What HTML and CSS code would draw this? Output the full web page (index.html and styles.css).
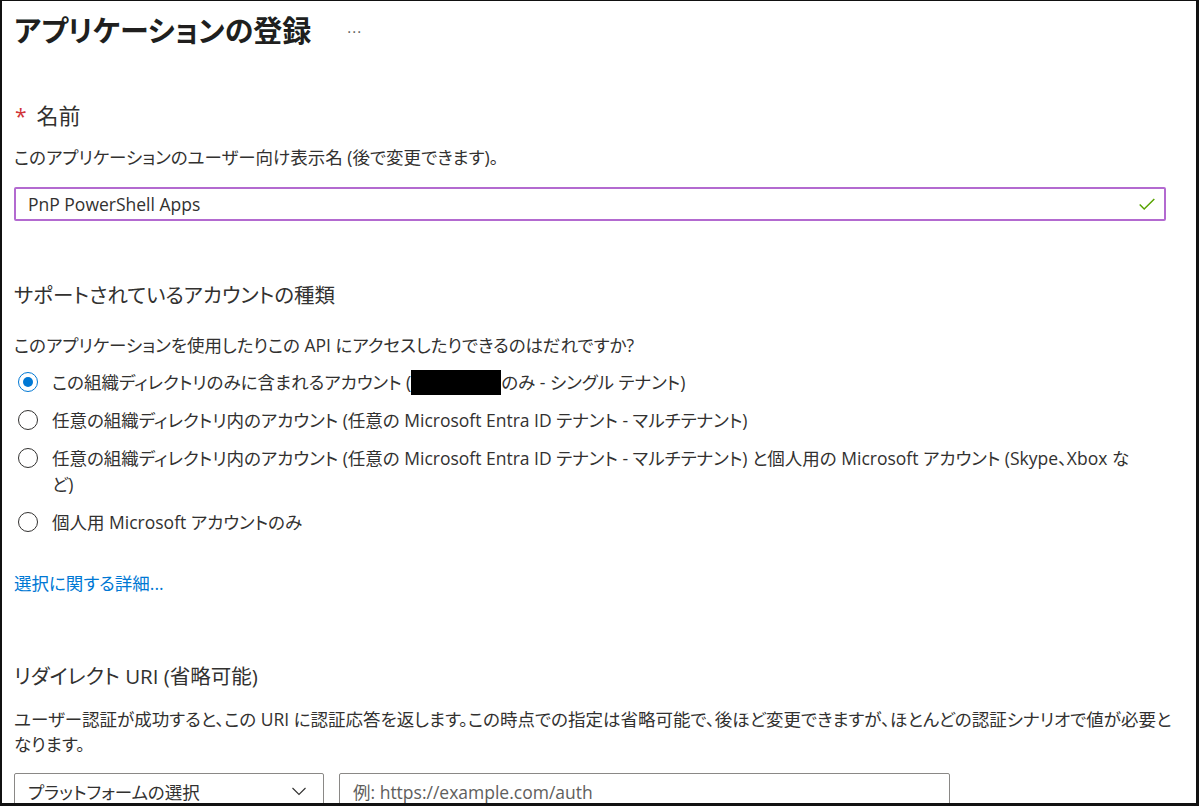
FILE: index.html
```html
<!DOCTYPE html>
<html lang="ja">
<head>
    <meta charset="UTF-8">
    <meta name="viewport" content="width=device-width, initial-scale=1.0">
    <title>アプリケーションの登録</title>
    <link rel="stylesheet" href="styles.css">
</head>
<body>

    <div class="frame">
        <div class="page-header">
            <h1>アプリケーションの登録</h1>
            <span class="more">···</span>
        </div>

        <!-- 名前 -->
        <div class="field-label"><span class="required">*</span>名前</div>
        <p class="hint">このアプリケーションのユーザー向け表示名 (後で変更できます)。</p>
        <div class="text-input valid">
            <span class="value">PnP PowerShell Apps</span>
            <svg class="check" width="18" height="18" viewBox="0 0 16 16">
                <path d="M1.5 8.5 L5.5 12.5 L14.5 3.5" fill="none" stroke="#57a300" stroke-width="1.3"/>
            </svg>
        </div>

        <!-- アカウントの種類 -->
        <h2>サポートされているアカウントの種類</h2>
        <p class="question">このアプリケーションを使用したりこの API にアクセスしたりできるのはだれですか?</p>
        <div class="radio-group">
            <div class="radio-row">
                <span class="radio checked"></span>
                <span class="radio-text">この組織ディレクトリのみに含まれるアカウント (<span class="redacted"></span>のみ - シングル テナント)</span>
            </div>
            <div class="radio-row">
                <span class="radio"></span>
                <span class="radio-text">任意の組織ディレクトリ内のアカウント (任意の Microsoft Entra ID テナント - マルチテナント)</span>
            </div>
            <div class="radio-row">
                <span class="radio"></span>
                <span class="radio-text">任意の組織ディレクトリ内のアカウント (任意の Microsoft Entra ID テナント - マルチテナント) と個人用の Microsoft アカウント (Skype、Xbox など)</span>
            </div>
            <div class="radio-row">
                <span class="radio"></span>
                <span class="radio-text">個人用 Microsoft アカウントのみ</span>
            </div>
        </div>
        <a class="link" href="#">選択に関する詳細...</a>

        <!-- リダイレクト URI -->
        <h2 class="redirect-title">リダイレクト URI (省略可能)</h2>
        <p class="desc">ユーザー認証が成功すると、この URI に認証応答を返します。この時点での指定は省略可能で、後ほど変更できますが、ほとんどの認証シナリオで値が必要となります。</p>
        <div class="redirect-row">
            <div class="select">
                <span>プラットフォームの選択</span>
                <svg width="16" height="16" viewBox="0 0 16 16">
                    <path d="M1.5 5 L8 11.5 L14.5 5" fill="none" stroke="#323130" stroke-width="1.1"/>
                </svg>
            </div>
            <div class="url-input">例: https://example.com/auth</div>
        </div>
    </div>

</body>
</html>
```

FILE: styles.css
```css
/* ページ全体 */
body {
    margin: 0;
    background: #fff;
    font-family: 'Open Sans', 'Noto Sans CJK JP', sans-serif;
    font-feature-settings: "palt";
    font-size: 17.5px;
    color: #323130;
}

.frame {
    box-sizing: border-box;
    width: 1199px;
    height: 806px;
    border-style: solid;
    border-color: #111;
    border-width: 1px 3px 3px 2px;
    padding: 12px 0 0 12px;
    overflow: hidden;
}

.page-header {
    display: flex;
    align-items: center;
    height: 36px;
}

h1 {
    margin: 0;
    font-size: 29px;
    font-weight: 700;
    line-height: 36px;
    color: #201f1e;
}

.more {
    margin-left: 36px;
    font-size: 15px;
    color: #605e5c;
    letter-spacing: 1px;
}

.field-label {
    margin-top: 52px;
    font-size: 22px;
    line-height: 28px;
}

.required {
    color: #d13438;
    font-size: 21px;
    margin: 0 10px 0 1px;
}

.hint, .question, .desc {
    margin: 0;
    line-height: 22px;
}

.hint { margin-top: 16px; }

.text-input {
    box-sizing: border-box;
    width: 1152px;
    height: 34px;
    margin-top: 19px;
    padding: 0 8px 0 12px;
    border-radius: 2px;
    display: flex;
    align-items: center;
    justify-content: space-between;
}

.text-input.valid { border: 2px solid #b36ad0; }

h2 {
    margin: 60px 0 0;
    font-size: 20.5px;
    font-weight: 400;
    line-height: 28px;
}

.question { margin-top: 25px; }

.radio-group {
    margin-top: 13px;
    display: flex;
    flex-direction: column;
    gap: 12px;
    width: 1125px;
}

.radio-row {
    display: flex;
    align-items: flex-start;
    gap: 14px;
    padding-left: 4px;
    line-height: 26px;
}

.radio {
    flex: none;
    box-sizing: border-box;
    width: 20px;
    height: 20px;
    margin-top: 3px;
    border: 1px solid #323130;
    border-radius: 50%;
    display: flex;
    align-items: center;
    justify-content: center;
}

.radio.checked { border-color: #0078d4; }

.radio.checked::after {
    content: "";
    width: 10px;
    height: 10px;
    border-radius: 50%;
    background: #0078d4;
}

.redacted {
    display: inline-block;
    width: 90px;
    height: 25px;
    background: #000;
    vertical-align: -6px;
}

.link {
    display: block;
    margin-top: 37px;
    line-height: 22px;
    color: #0078d4;
    text-decoration: none;
}

.redirect-title { margin-top: 68px; }

.desc {
    margin-top: 17px;
    line-height: 25px;
    width: 1160px;
}

.redirect-row {
    display: flex;
    gap: 15px;
    margin-top: 16px;
}

.select, .url-input {
    box-sizing: border-box;
    height: 36px;
    border: 1px solid #8a8886;
    border-radius: 2px;
    display: flex;
    align-items: center;
}

.select {
    width: 310px;
    padding: 0 16px 0 13px;
    justify-content: space-between;
}

.url-input {
    width: 611px;
    padding: 0 13px;
    color: #605e5c;
}
```
